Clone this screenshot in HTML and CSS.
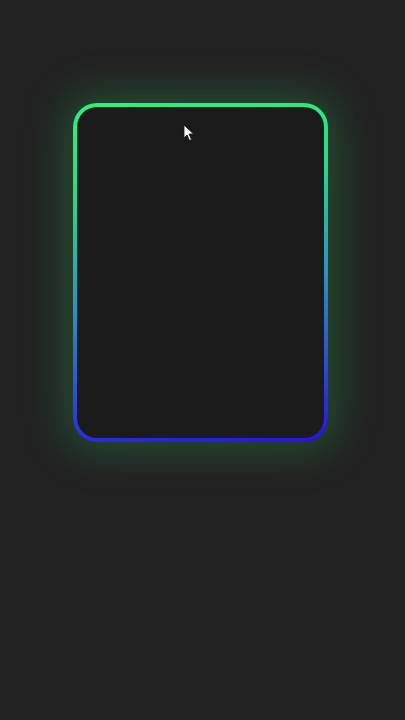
FILE: index.html
```html
<!DOCTYPE html>
<html>
<head>
<meta charset="utf-8">
<link rel="stylesheet" href="styles.css">
</head>
<body>
<div class="stage">
  <div class="card">
    <div class="card-inner"></div>
  </div>
  <svg class="cursor" width="12" height="18" viewBox="0 0 12 18">
    <path d="M1 1 L1 14 L4 11 L6.5 16.5 L8.5 15.5 L6 10 L10.5 10 Z" fill="#ffffff" stroke="#111111" stroke-width="0.8" stroke-linejoin="round"/>
  </svg>
</div>
</body>
</html>
```

FILE: styles.css
```css
html, body {
  margin: 0;
  padding: 0;
  background: #222222;
  width: 405px;
  height: 720px;
  overflow: hidden;
  font-family: "Liberation Sans", sans-serif;
}
.stage {
  position: relative;
  width: 405px;
  height: 720px;
  padding-top: 103px;
  padding-left: 73px;
  box-sizing: border-box;
}
.card {
  width: 255px;
  height: 339px;
  box-sizing: border-box;
  padding: 4px;
  border-radius: 24px;
  background: linear-gradient(172deg, #2ef27c 0%, #2bd88a 25%, #2e90c0 55%, #2a10e4 100%);
  box-shadow: 0 0 40px 8px rgba(40, 170, 80, 0.34);
}
.card-inner {
  width: 100%;
  height: 100%;
  border-radius: 20px;
  background: #1b1b1b;
}
.cursor {
  position: absolute;
  left: 183px;
  top: 124px;
}
```
